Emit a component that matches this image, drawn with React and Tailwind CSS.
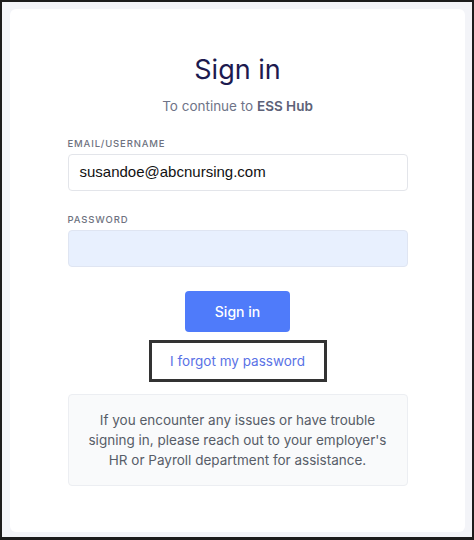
export default function App() {
  return (
    <div className="w-[474px] h-[540px] bg-[#1c1c1c] p-[2px] pb-[3px]">
      <div className="w-full h-full bg-[#f3f4f8] pl-[8px] pr-[7px] pt-[7px] pb-[5px]">
        <div className="w-full h-full bg-white rounded-[6px] flex flex-col items-center pt-[44px]" style={{ fontFamily: 'Inter, "Noto Sans", sans-serif' }}>
          <h1 className="text-[27px] leading-[34px] text-[#1c1a4f] font-normal">Sign in</h1>
          <p className="mt-[11px] text-[13.5px] leading-[16px] text-[#6f7488]">
            To continue to <span className="font-semibold text-[#5d6278]">ESS Hub</span>
          </p>
          <div className="w-[340px] mt-[24px]">
            <label className="block text-[9.5px] leading-[12px] tracking-[0.09em] text-[#6e7280] font-medium">EMAIL/USERNAME</label>
            <div className="mt-[4px] h-[37px] border border-[#e3e5ea] rounded-[4px] flex items-center px-[11px] text-[15px] text-[#111]" style={{ fontFamily: '"Liberation Sans", Arial, sans-serif' }}>
              susandoe@abcnursing.com
            </div>
            <label className="block mt-[23px] text-[9.5px] leading-[12px] tracking-[0.09em] text-[#6e7280] font-medium">PASSWORD</label>
            <div className="mt-[4px] h-[37px] border border-[#dfe5f2] rounded-[4px] bg-[#e8f0fe]"></div>
          </div>
          <button className="mt-[24px] w-[105px] h-[41px] rounded-[4px] bg-[#4f7bfa] text-white text-[14px] font-medium">Sign in</button>
          <div className="mt-[8px] w-[178px] h-[42px] border-[3px] border-[#333] flex items-center justify-center text-[13.5px] text-[#5a72e6]">
            I forgot my password
          </div>
          <div className="mt-[12px] w-[340px] h-[92px] bg-[#f9fafb] border border-[#eceef2] rounded-[4px] flex items-center justify-center text-center text-[13.5px] leading-[20px] text-[#575d68] px-[12px]">
            If you encounter any issues or have trouble signing in, please reach out to your employer's HR or Payroll department for assistance.
          </div>
        </div>
      </div>
    </div>
  );
}
